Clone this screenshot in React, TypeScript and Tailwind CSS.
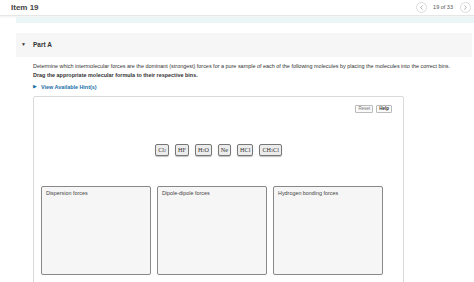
import { ChevronLeft, ChevronRight } from "lucide-react";

type Chip = { base: string; sub?: string; tail?: string };

const chips: Chip[] = [
  { base: "Cl", sub: "2" },
  { base: "HF" },
  { base: "H", sub: "2", tail: "O" },
  { base: "Ne" },
  { base: "HCl" },
  { base: "CH", sub: "3", tail: "Cl" },
];

const bins = ["Dispersion forces", "Dipole-dipole forces", "Hydrogen bonding forces"];

const App = () => {
  return (
    <div className="w-[474px] h-[282px] overflow-hidden bg-white font-['Liberation_Sans',Arial,sans-serif] text-[#333]">
      {/* Header */}
      <div className="h-[16px] flex items-center justify-between pl-[11px] pr-[3px] border-b border-[#e6e6e6] shadow-[0_1px_2px_rgba(0,0,0,0.06)]">
        <span className="text-[8px] font-bold text-[#444]">Item 19</span>
        <div className="flex items-center">
          <button className="w-[11px] h-[11px] rounded-full border border-[#dcdcdc] flex items-center justify-center text-[#777]">
            <ChevronLeft size={7} strokeWidth={2} />
          </button>
          <span className="text-[5.5px] text-[#555] ml-[6px] mr-[7px]">19 of 33</span>
          <button className="w-[11px] h-[11px] rounded-full border border-[#dcdcdc] flex items-center justify-center text-[#777]">
            <ChevronRight size={7} strokeWidth={2} />
          </button>
        </div>
      </div>

      {/* Teal band */}
      <div className="ml-[16px] mt-[1px] h-[6px] bg-[#eaf6f6]" />

      {/* Part A */}
      <div className="ml-[16px] mr-[2px] mt-[10px] h-[24px] bg-[#f6f6f6] flex items-center pl-[5px]">
        <span className="text-[5px] text-[#333]">▼</span>
        <span className="ml-[7px] text-[6.5px] font-bold text-[#333]">Part A</span>
      </div>

      {/* Content */}
      <div className="pl-[33px] pt-[5px]">
        <p className="text-[5.45px] leading-[9px] text-[#333] whitespace-nowrap">
          Determine which intermolecular forces are the dominant (strongest) forces for a pure sample of each of the following molecules by placing the molecules into the correct bins.
        </p>
        <p className="text-[5.45px] leading-[9px] font-bold text-[#333] whitespace-nowrap">
          Drag the appropriate molecular formula to their respective bins.
        </p>
        <div className="flex items-center h-[14px] text-[#1a6fa8]">
          <span className="text-[4.5px]">▶</span>
          <span className="ml-[4px] text-[5.4px] font-bold">View Available Hint(s)</span>
        </div>

        {/* Drag area */}
        <div className="mt-[2px] w-[371px] h-[200px] border border-[#dadada] rounded-tl-[2px] rounded-tr-[2px]">
          <div className="flex justify-end gap-[3px] pt-[8px] pr-[11px]">
            <button className="h-[8px] px-[2px] border border-[#bbb] rounded-[1px] bg-[#fafafa] text-[4.5px] leading-none text-[#777]">Reset</button>
            <button className="h-[8px] px-[2px] border border-[#bbb] rounded-[1px] bg-[#fafafa] text-[4.5px] leading-none font-bold text-[#333]">Help</button>
          </div>

          <div className="flex justify-center gap-[6px] mt-[31px]">
            {chips.map((c) => (
              <div
                key={c.base + (c.tail ?? "")}
                className="h-[12px] px-[2px] flex items-center border border-[#777] rounded-[2px] bg-[#ececec] shadow-[0_1px_1px_rgba(0,0,0,0.25)] font-['Liberation_Serif',serif] text-[6.2px] text-[#333] leading-none"
              >
                {c.base}
                {c.sub && <sub className="text-[4px] relative top-[1px]">{c.sub}</sub>}
                {c.tail}
              </div>
            ))}
          </div>

          <div className="flex gap-[6px] mt-[30px] pl-[7px]">
            {bins.map((b) => (
              <div key={b} className="w-[110px] h-[89px] border border-[#888] rounded-[2px] bg-[#f6f6f6] px-[4px] pt-[3px] text-[5.4px] leading-[7px] text-[#444]">
                {b}
              </div>
            ))}
          </div>
        </div>
      </div>
    </div>
  );
};

export default App;
